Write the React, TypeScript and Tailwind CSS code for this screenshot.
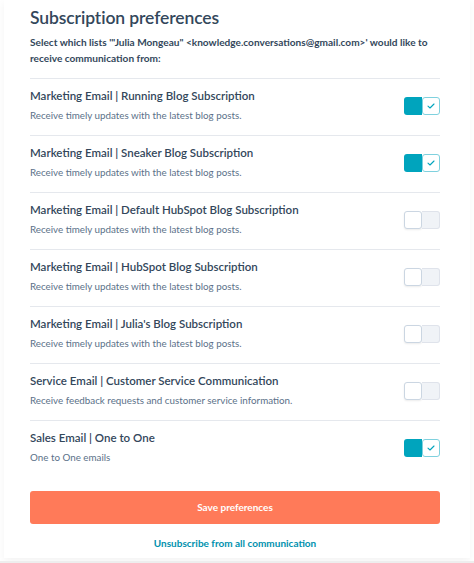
const items = [
  {
    title: "Marketing Email | Running Blog Subscription",
    desc: "Receive timely updates with the latest blog posts.",
    on: true,
  },
  {
    title: "Marketing Email | Sneaker Blog Subscription",
    desc: "Receive timely updates with the latest blog posts.",
    on: true,
  },
  {
    title: "Marketing Email | Default HubSpot Blog Subscription",
    desc: "Receive timely updates with the latest blog posts.",
    on: false,
  },
  {
    title: "Marketing Email | HubSpot Blog Subscription",
    desc: "Receive timely updates with the latest blog posts.",
    on: false,
  },
  {
    title: "Marketing Email | Julia's Blog Subscription",
    desc: "Receive timely updates with the latest blog posts.",
    on: false,
  },
  {
    title: "Service Email | Customer Service Communication",
    desc: "Receive feedback requests and customer service information.",
    on: false,
  },
  {
    title: "Sales Email | One to One",
    desc: "One to One emails",
    on: true,
  },
];

function Toggle({ on }: { on: boolean }) {
  if (on) {
    return (
      <div className="flex w-[36px] h-[18px] shrink-0">
        <div className="w-[18px] h-full bg-[#00a4bd] rounded-l-[3px]" />
        <div className="w-[18px] h-full bg-white border border-[#7fd1de] rounded-[3px] flex items-center justify-center">
          <svg width="8" height="6" viewBox="0 0 8 6" fill="none">
            <path
              d="M1 3.2 L3 5 L7 1"
              stroke="#00a4bd"
              strokeWidth="1.1"
              strokeLinecap="round"
              strokeLinejoin="round"
            />
          </svg>
        </div>
      </div>
    );
  }
  return (
    <div className="flex w-[36px] h-[18px] shrink-0">
      <div className="w-[18px] h-full bg-white border border-[#cbd6e2] rounded-[3px] shadow-[0_1px_2px_rgba(0,0,0,0.08)]" />
      <div className="w-[18px] h-full bg-[#f0f3f7] border border-l-0 border-[#dfe3eb] rounded-r-[3px]" />
    </div>
  );
}

export default function App() {
  return (
    <div className="w-[474px] h-[563px] bg-white font-['Lato','Liberation_Sans',sans-serif] overflow-hidden flex flex-col">
      <div className="mx-[4px] h-[558px] bg-white shadow-[0_3px_8px_rgba(0,0,0,0.05)] pl-[26px] pr-[30px] pt-[6px]">
        <h1 className="text-[17.5px] leading-[24px] font-semibold tracking-[-0.1px] text-[#33475b]">
          Subscription preferences
        </h1>
        <p className="mt-[4px] text-[10.1px] leading-[16px] font-bold text-[#33475b]">
          Select which lists '"Julia Mongeau" &lt;knowledge.conversations@gmail.com&gt;' would like to receive communication from:
        </p>
        <div className="mt-[12px]">
          {items.map((item) => (
            <div
              key={item.title}
              className="flex items-center justify-between border-t border-[#e5e8ed] pt-[9px] pb-[12px]"
            >
              <div>
                <div className="text-[11.5px] leading-[16px] font-semibold text-[#33475b]">
                  {item.title}
                </div>
                <div className="mt-[3px] text-[9.8px] leading-[16px] text-[#5b7189]">
                  {item.desc}
                </div>
              </div>
              <Toggle on={item.on} />
            </div>
          ))}
        </div>
        <button className="mt-[14px] w-full h-[33px] rounded-[3px] bg-[#ff7a59] text-white text-[10px] font-bold">
          Save preferences
        </button>
        <div className="mt-[11px] text-center text-[10px] leading-[16px] font-bold text-[#0091ae]">
          Unsubscribe from all communication
        </div>
      </div>
      <div className="mt-auto h-[2px] bg-[#eeeeee]" />
    </div>
  );
}
